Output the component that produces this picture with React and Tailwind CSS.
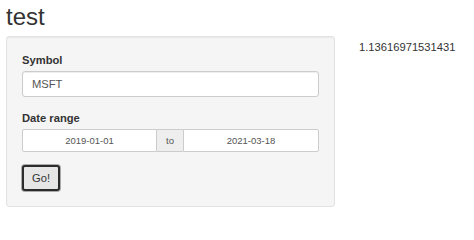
export default function App() {
  return (
    <div className="w-[474px] h-[218px] bg-white pl-[6px] text-[#333] font-['Liberation_Sans',Arial,sans-serif] text-[11.2px] leading-[16px]">
      <h2 className="text-[24px] leading-[26px] mt-[4px] mb-[6px] font-normal text-[#333]">test</h2>
      <div className="flex">
        <div className="w-[329px] h-[171px] bg-[#f5f5f5] border border-[#e3e3e3] rounded-[3px] shadow-[inset_0_1px_1px_rgba(0,0,0,0.05)] pt-[15px] px-[15px]">
          <label className="block font-bold h-[16px] mb-[3px]">Symbol</label>
          <div className="h-[26px] bg-white border border-[#ccc] rounded-[3px] shadow-[inset_0_1px_1px_rgba(0,0,0,0.075)] flex items-center pl-[9px] text-[#555]">
            MSFT
          </div>
          <label className="block font-bold h-[16px] mt-[13px] mb-[3px]">Date range</label>
          <div className="flex h-[23px] text-[9.5px] text-[#555]">
            <div className="w-[135px] bg-white border border-[#ccc] rounded-l-[2px] flex items-center justify-center">2019-01-01</div>
            <div className="w-[26px] bg-[#eee] border-y border-[#ccc] flex items-center justify-center">to</div>
            <div className="w-[136px] bg-white border border-[#ccc] rounded-r-[2px] flex items-center justify-center">2021-03-18</div>
          </div>
          <button className="mt-[13px] w-[38px] h-[26px] bg-[#e6e6e6] border-2 border-[#2b2b2b] rounded-[3px] text-[11.2px] text-[#333] ring-1 ring-[#aaa] flex items-center justify-center">
            Go!
          </button>
        </div>
        <div className="ml-[24px] pt-[3px]">1.13616971531431</div>
      </div>
    </div>
  );
}
